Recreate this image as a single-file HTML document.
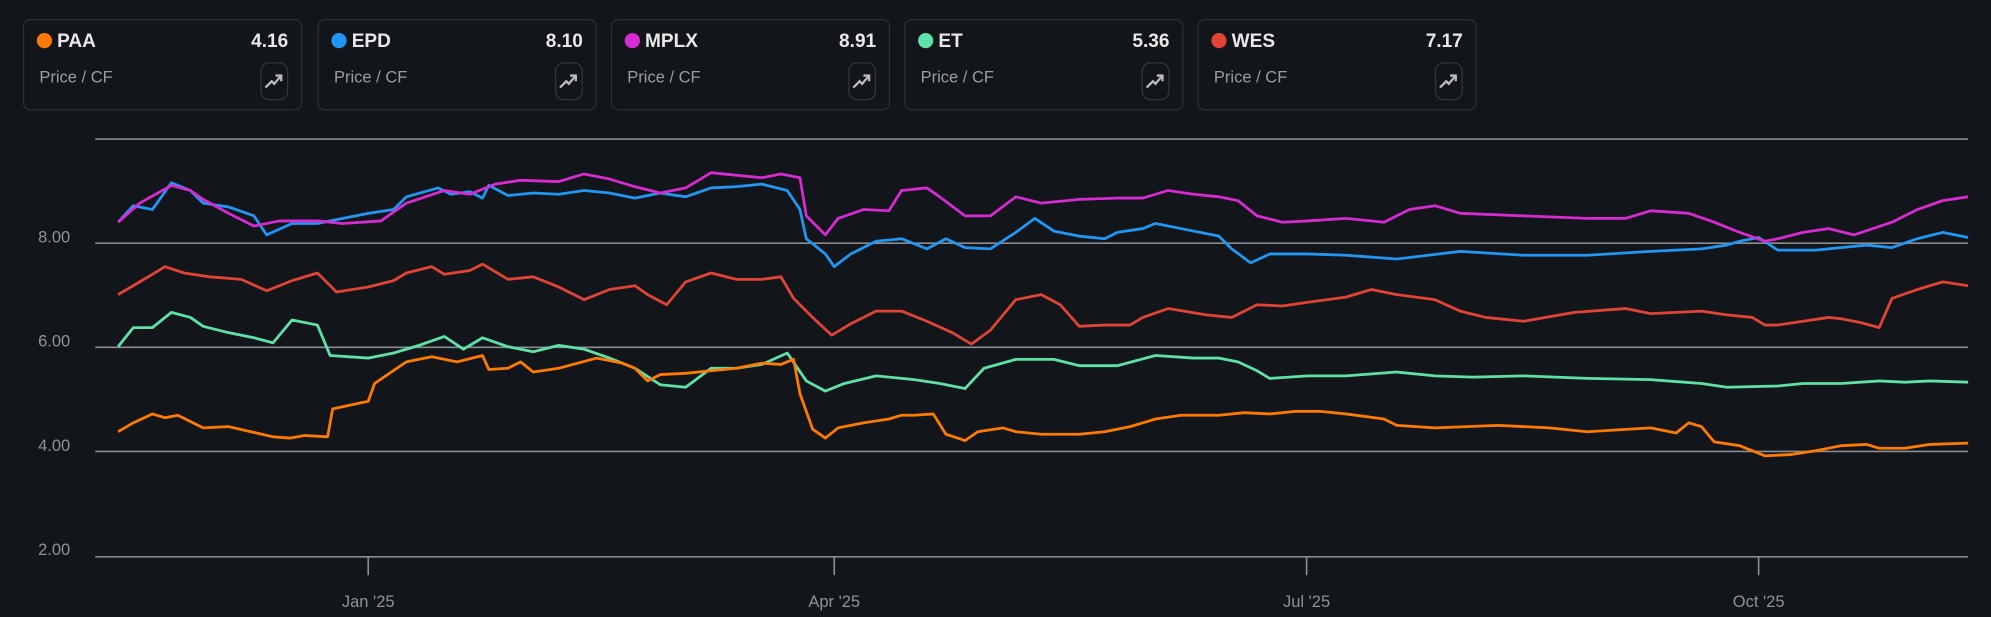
<!DOCTYPE html>
<html><head><meta charset="utf-8"><style>
html,body{margin:0;padding:0;background:#121519;width:1991px;height:617px;overflow:hidden}
#w{position:absolute;left:0;top:0;width:1568px;height:486px;transform:scale(1.26977);transform-origin:0 0;font-family:"Liberation Sans",sans-serif}
.card{position:absolute;top:15px;width:218px;height:70px;border:1px solid #2b2f35;border-radius:6px}
.dot{position:absolute;left:10px;top:10px;width:12px;height:12px;border-radius:50%}
.tk{position:absolute;left:26px;top:8px;color:#e8e8e8;font-weight:bold;font-size:15px}
.v{position:absolute;right:10px;top:8px;color:#e8e8e8;font-weight:bold;font-size:15px}
.l{position:absolute;left:12px;top:37px;color:#9a9ea3;font-size:13px}
.b{position:absolute;right:10px;top:33px;width:20px;height:28px;border:1px solid #33373d;border-radius:7px}
.b svg{position:absolute;left:2px;top:6px}
</style></head><body><div id="w">
<div class="card" style="left:18px"><div class="dot" style="background:#ff7a00"></div><div class="tk">PAA</div><div class="v">4.16</div><div class="l">Price / CF</div><div class="b"><svg width="16" height="16" viewBox="0 0 16 16"><path d="M1 13 L6 8 L8 10 L13 4 M9 3.5 H13.5 V8" fill="none" stroke="#bbb" stroke-width="1.8"/></svg></div></div>
<div class="card" style="left:250px"><div class="dot" style="background:#2196f3"></div><div class="tk">EPD</div><div class="v">8.10</div><div class="l">Price / CF</div><div class="b"><svg width="16" height="16" viewBox="0 0 16 16"><path d="M1 13 L6 8 L8 10 L13 4 M9 3.5 H13.5 V8" fill="none" stroke="#bbb" stroke-width="1.8"/></svg></div></div>
<div class="card" style="left:481px"><div class="dot" style="background:#d62bd0"></div><div class="tk">MPLX</div><div class="v">8.91</div><div class="l">Price / CF</div><div class="b"><svg width="16" height="16" viewBox="0 0 16 16"><path d="M1 13 L6 8 L8 10 L13 4 M9 3.5 H13.5 V8" fill="none" stroke="#bbb" stroke-width="1.8"/></svg></div></div>
<div class="card" style="left:712px"><div class="dot" style="background:#5fe0a6"></div><div class="tk">ET</div><div class="v">5.36</div><div class="l">Price / CF</div><div class="b"><svg width="16" height="16" viewBox="0 0 16 16"><path d="M1 13 L6 8 L8 10 L13 4 M9 3.5 H13.5 V8" fill="none" stroke="#bbb" stroke-width="1.8"/></svg></div></div>
<div class="card" style="left:943px"><div class="dot" style="background:#e04436"></div><div class="tk">WES</div><div class="v">7.17</div><div class="l">Price / CF</div><div class="b"><svg width="16" height="16" viewBox="0 0 16 16"><path d="M1 13 L6 8 L8 10 L13 4 M9 3.5 H13.5 V8" fill="none" stroke="#bbb" stroke-width="1.8"/></svg></div></div>
<svg style="position:absolute;left:0;top:0" width="1568" height="486" font-family="Liberation Sans, sans-serif">
<g stroke="#8a8e93" stroke-width="1.3"><line x1="75" y1="109.5" x2="1550" y2="109.5"/><line x1="75" y1="191.5" x2="1550" y2="191.5"/><line x1="75" y1="273.5" x2="1550" y2="273.5"/><line x1="75" y1="355.5" x2="1550" y2="355.5"/><line x1="75" y1="438.5" x2="1550" y2="438.5"/>
<line x1="290" y1="438" x2="290" y2="453"/><line x1="657" y1="438" x2="657" y2="453"/><line x1="1029" y1="438" x2="1029" y2="453"/><line x1="1385" y1="438" x2="1385" y2="453"/></g>
<g fill="#8f9398" font-size="13"><text x="30" y="191">8.00</text><text x="30" y="273">6.00</text><text x="30" y="355">4.00</text><text x="30" y="437">2.00</text>
<g text-anchor="middle"><text x="290" y="478">Jan '25</text><text x="657" y="478">Apr '25</text><text x="1029" y="478">Jul '25</text><text x="1385" y="478">Oct '25</text></g></g>
<g fill="none" stroke-width="2.2" stroke-linejoin="round">
<polyline stroke="#e04436" points="93,232 110,222 130,210 145,215 165,218 190,220 210,229 230,221 250,215 265,230 290,226 310,221 320,215 340,210 350,216 370,213 380,208 400,220 420,218 440,226 460,236 480,228 500,225 510,232 525,240 540,222 560,215 580,220 600,220 615,218 625,235 640,250 655,264 670,255 690,245 710,245 730,253 750,262 765,271 780,260 800,236 820,232 835,240 850,257 870,256 890,256 900,250 920,243 950,248 970,250 990,240 1010,241 1030,238 1060,234 1080,228 1100,232 1130,236 1150,245 1170,250 1200,253 1240,246 1280,243 1300,247 1340,245 1360,248 1380,250 1390,256 1400,256 1420,253 1440,250 1450,251 1465,254 1480,258 1490,235 1510,228 1530,222 1550,225"/>
<polyline stroke="#5fe0a6" points="93,273 105,258 120,258 135,246 150,250 160,257 180,262 200,266 215,270 230,252 250,256 260,280 290,282 310,278 330,272 350,265 365,275 380,266 400,273 420,277 440,272 460,275 480,282 500,290 520,303 540,305 560,290 580,290 600,287 620,278 635,300 650,308 665,302 690,296 720,299 740,302 760,306 775,290 800,283 830,283 850,288 880,288 910,280 940,282 960,282 975,285 990,292 1000,298 1030,296 1060,296 1100,293 1130,296 1160,297 1200,296 1250,298 1300,299 1340,302 1360,305 1400,304 1420,302 1450,302 1480,300 1500,301 1520,300 1550,301"/>
<polyline stroke="#ff7a00" points="93,340 105,333 120,326 130,329 140,327 160,337 180,336 215,344 228,345 240,343 258,344 262,322 290,316 295,302 320,285 340,281 360,285 380,280 385,291 400,290 410,285 420,293 440,290 470,282 490,286 500,290 510,300 520,295 540,294 560,292 580,290 600,286 615,287 625,283 630,310 640,338 650,345 660,337 680,333 700,330 710,327 720,327 735,326 745,342 760,347 770,340 790,337 800,340 820,342 850,342 870,340 890,336 910,330 930,327 960,327 980,325 1000,326 1020,324 1040,324 1060,326 1090,330 1100,335 1130,337 1180,335 1220,337 1250,340 1300,337 1320,341 1330,333 1340,336 1350,348 1370,351 1390,359 1410,358 1430,355 1450,351 1470,350 1480,353 1500,353 1520,350 1550,349"/>
<polyline stroke="#2196f3" points="93,175 105,162 120,165 135,144 150,150 160,160 180,163 200,170 210,185 230,176 250,176 265,173 290,168 310,165 320,155 345,148 355,153 370,151 380,156 385,146 400,154 420,152 440,153 460,150 480,152 500,156 520,152 540,155 560,148 580,147 600,145 620,150 630,165 635,188 650,200 657,210 670,200 690,190 710,188 730,196 745,188 760,195 780,196 800,183 815,172 830,182 850,186 870,188 880,183 900,180 910,176 930,180 960,186 970,196 985,207 1000,200 1030,200 1060,201 1100,204 1150,198 1200,201 1250,201 1300,198 1340,196 1360,193 1370,190 1385,187 1400,197 1430,197 1470,193 1490,195 1510,188 1530,183 1550,187"/>
<polyline stroke="#d62bd0" points="93,175 110,160 135,146 150,150 160,157 180,168 200,178 220,174 250,174 270,176 300,174 320,160 350,150 370,153 390,145 410,142 440,143 460,137 480,141 500,147 520,152 540,148 560,136 580,138 600,140 615,137 630,140 635,170 650,185 660,172 680,165 700,166 710,150 730,148 740,155 760,170 780,170 800,155 820,160 850,157 880,156 900,156 920,150 940,153 960,155 975,158 990,170 1010,175 1030,174 1060,172 1090,175 1110,165 1130,162 1150,168 1200,170 1250,172 1280,172 1300,166 1330,168 1350,175 1370,183 1390,190 1400,188 1420,183 1440,180 1460,185 1490,175 1510,165 1530,158 1550,155"/>
</g></svg>
</div></body></html>
